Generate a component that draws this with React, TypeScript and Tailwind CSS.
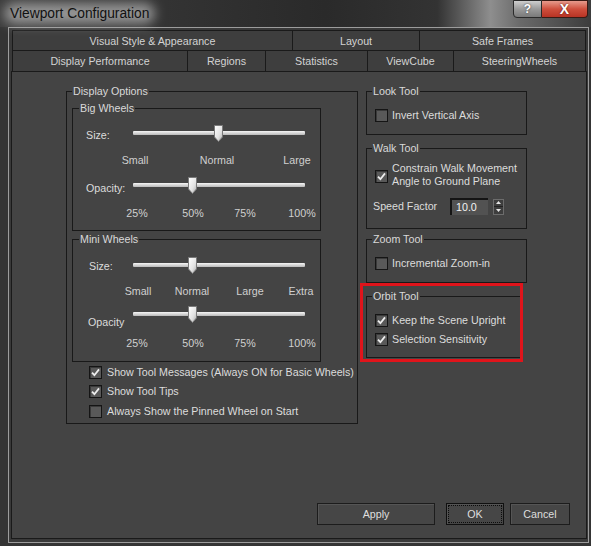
import React from "react";

// Small building blocks for the dark 3ds Max style dialog

function Check({ checked = false }: { checked?: boolean }) {
  return (
    <span className="flex h-[13px] w-[13px] shrink-0 items-center justify-center border border-[#151515] bg-[#595959] shadow-[inset_1px_1px_0_#3a3a3a]">
      {checked && (
        <svg width="9" height="9" viewBox="0 0 9 9">
          <path d="M1 4.6 L3.4 7.2 L8 1.4" fill="none" stroke="#eeeeee" strokeWidth="1.8" />
        </svg>
      )}
    </span>
  );
}

function Thumb() {
  return (
    <svg width="9" height="17" viewBox="0 0 9 17">
      <defs>
        <linearGradient id="thumbFill" x1="0" y1="0" x2="1" y2="1">
          <stop offset="0" stopColor="#ffffff" />
          <stop offset="0.6" stopColor="#e2e2e2" />
          <stop offset="1" stopColor="#a9a9a9" />
        </linearGradient>
      </defs>
      <path d="M0.5 0.5 H8.5 V12 L4.5 16.5 L0.5 12 Z" fill="url(#thumbFill)" stroke="#7a7a7a" strokeWidth="1" />
    </svg>
  );
}

function Slider({ pos }: { pos: string }) {
  return (
    <div className="relative h-[18px] w-[172px]">
      <div className="absolute left-0 right-0 top-[6px] h-[4px] rounded-[1px] bg-gradient-to-b from-[#f6f6f6] to-[#b9b9b9]" />
      <div className={`absolute top-0 ${pos}`}>
        <Thumb />
      </div>
    </div>
  );
}

function Tick({ className, children }: { className: string; children: React.ReactNode }) {
  return <span className={`flex w-0 justify-center whitespace-nowrap ${className}`}>{children}</span>;
}

function Group({
  title,
  className,
  legendClass = "ml-[5px]",
  children,
}: {
  title: string;
  className: string;
  legendClass?: string;
  children: React.ReactNode;
}) {
  return (
    <fieldset className={`min-w-0 border border-[#191919] ${className}`}>
      <legend className={`px-[1px] leading-[14px] text-[#d9d9d9] ${legendClass}`}>{title}</legend>
      {children}
    </fieldset>
  );
}

function CheckRow({
  checked,
  label,
  className,
}: {
  checked?: boolean;
  label: string;
  className: string;
}) {
  return (
    <div className={`flex h-[14px] items-center leading-[14px] ${className}`}>
      <Check checked={checked} />
      <span className="whitespace-nowrap">{label}</span>
    </div>
  );
}

function Tab({ className, children }: { className: string; children: React.ReactNode }) {
  return (
    <div
      className={`flex items-center justify-center border-l border-t border-[#1a1a1a] bg-[#3e3e3e] pt-[1px] text-[#d3d3d3] ${className}`}
    >
      {children}
    </div>
  );
}

function Button({ className, children, focused = false }: { className: string; children: React.ReactNode; focused?: boolean }) {
  return (
    <div
      className={`relative flex h-[22px] items-center justify-center border border-[#1c1c1c] bg-[#464646] text-[#dedede] shadow-[inset_1px_1px_0_#555] ${className}`}
    >
      {focused && <span className="absolute inset-[1px] border border-dotted border-[#0c0c0c]" />}
      <span className="relative">{children}</span>
    </div>
  );
}

export default function App() {
  return (
    <div className="relative h-[546px] w-[591px] overflow-hidden bg-[#343434] font-['Liberation_Sans',Arial,sans-serif] text-[10.7px] text-[#dcdcdc]">
      {/* title bar */}
      <div className="flex h-[27px] items-start bg-[linear-gradient(90deg,#3d3d3d_0%,#343434_25%,#2a2a2a_55%,#333_74%,#8e8e8e_83%,#6a6a6a_88%,#3c3c3c_100%)]">
        <div className="relative ml-[10px] mt-[5px]">
          <div className="absolute -inset-x-[6px] -inset-y-[2px] rounded-full bg-[#bdbdbd] opacity-70 blur-[6px]" />
          <span className="relative text-[13.8px] leading-[17px] text-[#111]">Viewport Configuration</span>
        </div>
        <div className="ml-auto mr-[3px] flex">
          <div className="flex h-[18px] w-[29px] items-center justify-center rounded-bl-[4px] border border-[#2a2a2a] bg-gradient-to-b from-[#cfcfcf] via-[#9a9a9a] to-[#7a7a7a] text-[12px] font-bold text-white [text-shadow:0_0_2px_#333]">
            ?
          </div>
          <div className="flex h-[18px] w-[46px] items-center justify-center rounded-br-[4px] border border-l-0 border-[#3a1a14] bg-gradient-to-b from-[#e69a8c] via-[#cf4f3d] to-[#b83324] text-[14px] font-bold text-white [text-shadow:0_0_2px_#4a0d06]">
            X
          </div>
        </div>
      </div>

      {/* client area */}
      <div className="ml-[8px] h-[516px] w-[581px] border border-[#9c9c9c] bg-[#393939] pt-[2px]">
        {/* tab rows */}
        <div className="ml-[3px] w-[574px]">
          <div className="flex h-[20px]">
            <Tab className="w-[280px]">Visual Style &amp; Appearance</Tab>
            <Tab className="w-[127px]">Layout</Tab>
            <Tab className="w-[167px] border-r">Safe Frames</Tab>
          </div>
          <div className="flex h-[21px]">
            <Tab className="w-[175px]">Display Performance</Tab>
            <Tab className="w-[78px]">Regions</Tab>
            <Tab className="w-[102px]">Statistics</Tab>
            <Tab className="w-[86px]">ViewCube</Tab>
            <Tab className="w-[133px] border-r">SteeringWheels</Tab>
          </div>
        </div>

        {/* tab page */}
        <div className="ml-[2px] flex h-[468px] w-[576px] flex-col border border-[#1a1a1a] bg-[#444444]">
          <div className="flex items-start pl-[54px] pt-[12px]">
            {/* left column */}
            <Group title="Display Options" className="w-[292px] shrink-0 pb-[5px]">
              <Group title="Big Wheels" legendClass="ml-[6px]" className="ml-[5px] mt-[3px] w-[249px] pb-[10px]">
                <div className="mt-[10px] flex h-[18px] items-start">
                  <span className="mt-[4px] w-[60px] pl-[13px] leading-[13px]">Size:</span>
                  <Slider pos="left-[81px]" />
                </div>
                <div className="mt-[10px] flex h-[14px] leading-[14px] text-[#d0d0d0]">
                  <Tick className="ml-[62px]">Small</Tick>
                  <Tick className="ml-[82px]">Normal</Tick>
                  <Tick className="ml-[80px]">Large</Tick>
                </div>
                <div className="mt-[10px] flex h-[18px] items-start">
                  <span className="mt-[5px] w-[60px] pl-[13px] leading-[13px]">Opacity:</span>
                  <Slider pos="left-[55px]" />
                </div>
                <div className="mt-[11px] flex h-[14px] leading-[14px] text-[#d0d0d0]">
                  <Tick className="ml-[64px]">25%</Tick>
                  <Tick className="ml-[56px]">50%</Tick>
                  <Tick className="ml-[52px]">75%</Tick>
                  <Tick className="ml-[57px]">100%</Tick>
                </div>
              </Group>

              <Group title="Mini Wheels" legendClass="ml-[6px]" className="ml-[5px] mt-[1px] w-[249px] pb-[11px]">
                <div className="mt-[11px] flex h-[18px] items-start">
                  <span className="mt-[3px] w-[60px] pl-[16px] leading-[13px]">Size:</span>
                  <Slider pos="left-[55px]" />
                </div>
                <div className="mt-[9px] flex h-[14px] leading-[14px] text-[#d0d0d0]">
                  <Tick className="ml-[65px]">Small</Tick>
                  <Tick className="ml-[54px]">Normal</Tick>
                  <Tick className="ml-[58px]">Large</Tick>
                  <Tick className="ml-[51px]">Extra</Tick>
                </div>
                <div className="mt-[8px] flex h-[18px] items-start">
                  <span className="mt-[10px] w-[60px] pl-[15px] leading-[13px]">Opacity</span>
                  <Slider pos="left-[55px]" />
                </div>
                <div className="mt-[12px] flex h-[14px] leading-[14px] text-[#d0d0d0]">
                  <Tick className="ml-[64px]">25%</Tick>
                  <Tick className="ml-[56px]">50%</Tick>
                  <Tick className="ml-[52px]">75%</Tick>
                  <Tick className="ml-[57px]">100%</Tick>
                </div>
              </Group>

              <CheckRow checked label="Show Tool Messages (Always ON for Basic Wheels)" className="mt-[3px] gap-[5px] pl-[22px]" />
              <CheckRow checked label="Show Tool Tips" className="mt-[5px] gap-[5px] pl-[22px]" />
              <CheckRow label="Always Show the Pinned Wheel on Start" className="mt-[6px] gap-[5px] pl-[22px]" />
            </Group>

            {/* right column */}
            <div className="ml-[8px] flex flex-col">
              <Group title="Look Tool" className="w-[161px] pb-[12px]">
                <CheckRow label="Invert Vertical Axis" className="mt-[10px] gap-[4px] pl-[8px]" />
              </Group>

              <Group title="Walk Tool" className="mt-[6px] w-[161px] pb-[13px]">
                <div className="mt-[7px] flex items-start gap-[4px] pl-[8px]">
                  <span className="mt-[8px]">
                    <Check checked />
                  </span>
                  <span className="leading-[13px]">
                    Constrain Walk Movement
                    <br />
                    Angle to Ground Plane
                  </span>
                </div>
                <div className="mt-[10px] flex items-center">
                  <span className="w-[83px] pl-[6px]">Speed Factor</span>
                  <div className="flex h-[17px] w-[38px] items-center border-l-2 border-t-2 border-[#141414] bg-[#525252] pl-[4px] text-[#f2f2f2]">
                    10.0
                  </div>
                  <div className="ml-[5px] flex h-[16px] w-[11px] flex-col border border-[#6c6c6c] bg-[#3d3d3d]">
                    <div className="flex flex-1 items-center justify-center border-b border-[#222]">
                      <svg width="5" height="3" viewBox="0 0 5 3">
                        <path d="M0 3 L2.5 0 L5 3 Z" fill="#e4e4e4" />
                      </svg>
                    </div>
                    <div className="flex flex-1 items-center justify-center">
                      <svg width="5" height="3" viewBox="0 0 5 3">
                        <path d="M0 0 L2.5 3 L5 0 Z" fill="#e4e4e4" />
                      </svg>
                    </div>
                  </div>
                </div>
              </Group>

              <Group title="Zoom Tool" className="mt-[3px] w-[161px] pb-[12px]">
                <CheckRow label="Incremental Zoom-in" className="mt-[10px] gap-[4px] pl-[8px]" />
              </Group>

              <Group title="Orbit Tool" className="mt-[6px] w-[156px] pb-[11px]">
                <CheckRow checked label="Keep the Scene Upright" className="mt-[10px] gap-[4px] pl-[8px]" />
                <CheckRow checked label="Selection Sensitivity" className="mt-[5px] gap-[4px] pl-[8px]" />
              </Group>
            </div>
          </div>

          {/* dialog buttons */}
          <div className="mt-auto flex justify-end pb-[13px] pr-[16px]">
            <Button className="w-[118px]">Apply</Button>
            <Button className="ml-[11px] w-[58px] border-[#101010]" focused>
              OK
            </Button>
            <Button className="ml-[6px] w-[60px]">Cancel</Button>
          </div>
        </div>
      </div>

      {/* red highlight frame around the orbit settings */}
      <div className="absolute left-[360px] top-[283px] h-[79px] w-[163px] border-[3px] border-[#e0141b]" />
    </div>
  );
}
